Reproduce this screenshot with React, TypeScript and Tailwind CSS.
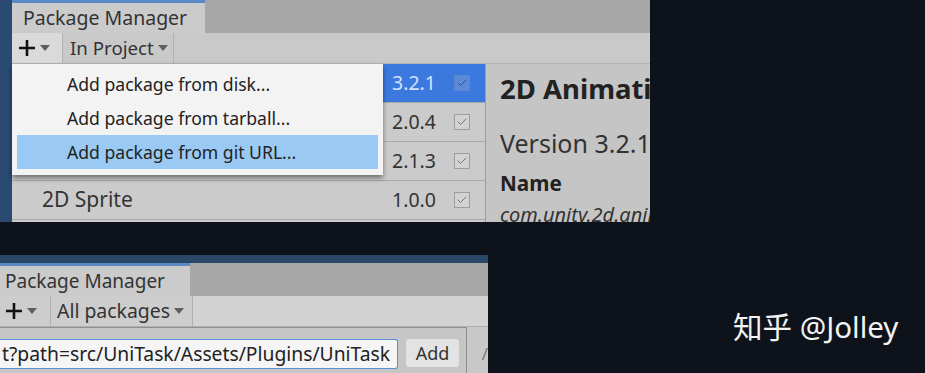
import { Check } from 'lucide-react';

const font = { fontFamily: '"Noto Sans", "Open Sans", sans-serif' };

function Caret() {
  return (
    <svg width="10" height="6" viewBox="0 0 10 6" className="ml-1">
      <path d="M0 0 L10 0 L5 6 Z" fill="#5f5f5f" />
    </svg>
  );
}

function Plus() {
  return (
    <svg width="18" height="18" viewBox="0 0 18 18">
      <path d="M9 1 V17 M1 9 H17" stroke="#111" strokeWidth="2.6" />
    </svg>
  );
}

function Tick({ selected = false }: { selected?: boolean }) {
  return (
    <span
      className={`flex h-[16px] w-[16px] items-center justify-center border ${
        selected ? 'border-[#5a86cf] bg-[#5d8ad8]' : 'border-[#9d9d9d] bg-[#d2d2d2]'
      }`}
    >
      <Check size={12} strokeWidth={2} color={selected ? '#2c4f8f' : '#777'} />
    </span>
  );
}

type Row = { name?: string; version: string; selected?: boolean };

const rows: Row[] = [
  { version: '3.2.1', selected: true },
  { version: '2.0.4' },
  { version: '2.1.3' },
  { name: '2D Sprite', version: '1.0.0' },
];

const menuItems = ['Add package from disk...', 'Add package from tarball...', 'Add package from git URL...'];

function TopWindow() {
  return (
    <div className="flex h-[222px] w-[650px] shrink-0 overflow-hidden">
      <div className="w-[12px] shrink-0 bg-[#2a4a74]" />
      <div className="relative flex w-[638px] shrink-0 flex-col">
        <div className="flex h-[33px] shrink-0 bg-[#a7a7a7]">
          <div className="flex w-[193px] items-center border-t-[3px] border-[#5b89c6] bg-[#cbcbcb] pl-[11px] text-[19.5px] text-[#333]">
            Package Manager
          </div>
        </div>
        <div className="flex h-[31px] shrink-0 items-stretch border-b border-[#b5b5b5] bg-[#c9c9c9]">
          <div className="flex w-[51px] items-center border-r border-[#b0b0b0] bg-[#dadada] pl-[6px]">
            <Plus />
            <Caret />
          </div>
          <div className="flex w-[111px] items-center border-r border-[#b0b0b0] pl-[7px] text-[18.7px] text-[#333]">
            In Project
            <Caret />
          </div>
        </div>
        <div className="flex min-h-0 flex-1">
          <div className="flex w-[473px] shrink-0 flex-col bg-[#cbcbcb]">
            {rows.map((r, i) => (
              <div
                key={i}
                className={`flex h-[39px] shrink-0 items-center border-b border-[#a9a9a9] pr-[15px] ${
                  r.selected ? 'bg-[#3c79df] text-[#d3e2ff]' : 'text-[#333]'
                }`}
              >
                <span className="pl-[30px] text-[21px]">{r.name}</span>
                <span className="ml-auto mr-[18px] text-[19.5px]">{r.version}</span>
                <Tick selected={r.selected} />
              </div>
            ))}
          </div>
          <div className="flex min-w-0 flex-1 flex-col overflow-hidden border-l border-[#9c9c9c] bg-[#c5c5c5] pl-[14px] text-[#222]">
            <div className="mt-[8px] whitespace-nowrap text-[27.5px] font-bold leading-[34px]">2D Animation</div>
            <div className="mt-[22px] whitespace-nowrap text-[25px] leading-[30px] text-[#333]">Version 3.2.1</div>
            <div className="mt-[12px] text-[20.7px] font-bold leading-[26px]">Name</div>
            <div className="mt-[6px] whitespace-nowrap text-[20px] italic leading-[26px] text-[#333]">com.unity.2d.animation</div>
          </div>
        </div>
        <div className="absolute left-0 top-[64px] flex h-[111px] w-[371px] flex-col bg-[#f3f3f3] pt-[3px] shadow-[0_3px_5px_rgba(0,0,0,0.45)]">
          {menuItems.map((m, i) => (
            <div
              key={m}
              className={`mx-[5px] flex h-[34px] items-center pl-[50px] text-[17.6px] text-[#222] ${
                i === 2 ? 'bg-[#9acaf3]' : ''
              }`}
            >
              {m}
            </div>
          ))}
        </div>
      </div>
    </div>
  );
}

function BottomWindow() {
  return (
    <div className="flex h-[118px] w-[488px] shrink-0 flex-col overflow-hidden">
      <div className="h-[8px] shrink-0 bg-[#2a4768]" />
      <div className="flex h-[33px] shrink-0 bg-[#a7a7a7]">
        <div className="flex w-[190px] items-center border-t-[3px] border-[#5b89c6] bg-[#cbcbcb] pl-[5px] text-[19px] text-[#333]">
          Package Manager
        </div>
      </div>
      <div className="flex h-[31px] shrink-0 items-stretch border-b border-[#b0b0b0] bg-[#d3d3d3]">
        <div className="flex w-[51px] items-center border-r border-[#b0b0b0] bg-[#cdcdcd] pl-[5px]">
          <Plus />
          <Caret />
        </div>
        <div className="flex w-[142px] items-center border-r border-[#b0b0b0] bg-[#cdcdcd] pl-[6px] text-[19.4px] text-[#333]">
          All packages
          <Caret />
        </div>
      </div>
      <div className="flex flex-1 bg-[#c8c8c8]">
        <div className="flex w-[467px] shrink-0 items-start gap-[8px] border-r border-t border-[#8f8f8f] bg-[#c6c6c6] pt-[11px]">
          <div className="flex h-[30px] w-[398px] shrink-0 items-center overflow-hidden rounded-r-[3px] border-[1.5px] border-l-0 border-[#5a8ed6] bg-[#f5f5f5] pl-[2px] text-[19.3px] text-[#222]">
            <span className="whitespace-nowrap">t?path=src/UniTask/Assets/Plugins/UniTask</span>
          </div>
          <div className="flex h-[28px] w-[53px] items-center justify-center rounded-[3px] bg-[#e3e3e3] text-[18px] text-[#333]">
            Add
          </div>
        </div>
        <div className="flex flex-1 items-start justify-end pt-[14px] text-[17px] text-[#777]">/</div>
      </div>
    </div>
  );
}

export default function App() {
  return (
    <div className="flex h-[373px] w-[925px] flex-col overflow-hidden bg-[#0e121a]" style={font}>
      <TopWindow />
      <div className="mt-[33px] flex">
        <BottomWindow />
        <div
          className="ml-[245px] mt-[55px] whitespace-nowrap text-[29.5px] leading-[34px] text-[#f2f2f2]"
          style={{ fontFamily: '"Noto Sans", "Noto Sans CJK SC", sans-serif' }}
        >
          知乎 @Jolley
        </div>
      </div>
    </div>
  );
}
